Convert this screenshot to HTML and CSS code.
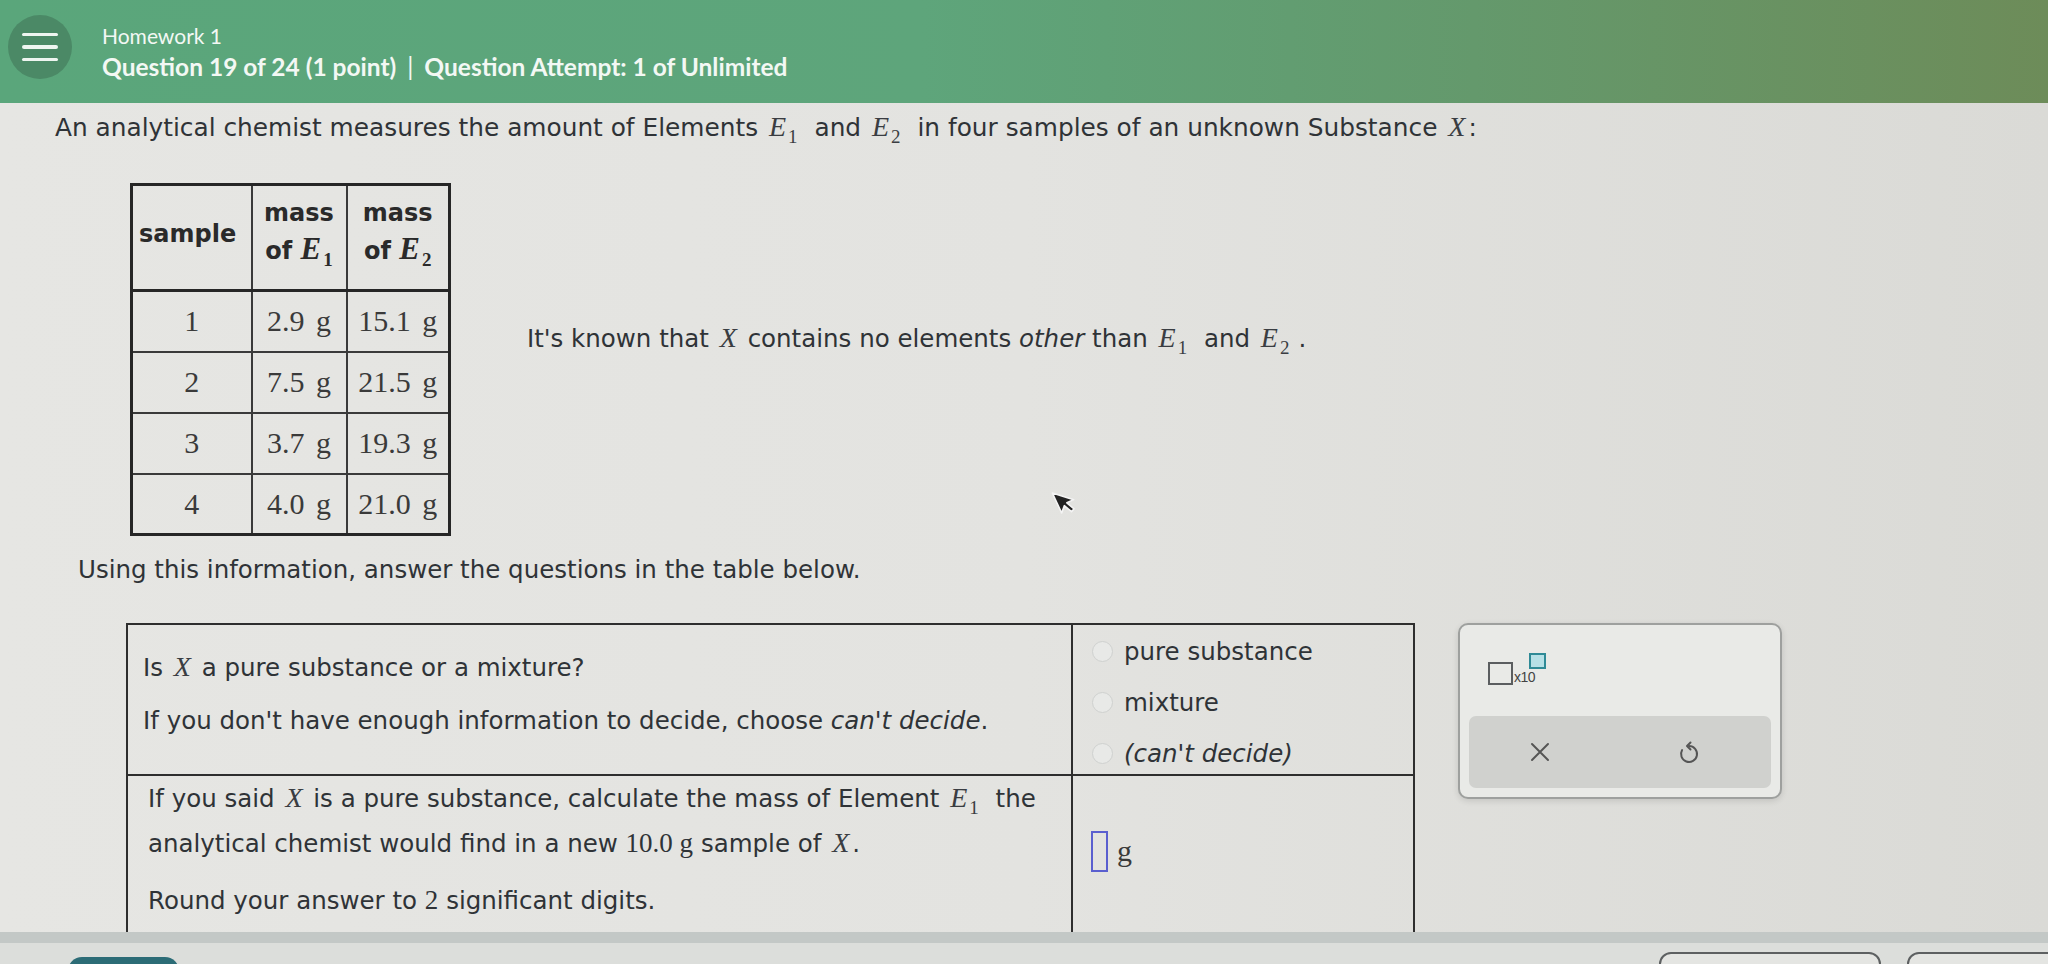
FILE: index.html
```html
<!DOCTYPE html>
<html lang="en">
<head>
<meta charset="utf-8">
<title>Homework 1</title>
<link rel="stylesheet" href="styles.css">
</head>
<body>
<header class="topbar">
  <div class="menu-btn"><span></span><span></span><span></span></div>
  <div class="titles">
    <div class="hw">Homework 1</div>
    <div class="qinfo">Question 19 of 24 (1 point) <span class="sep">|</span> Question Attempt: 1 of Unlimited</div>
  </div>
</header>

<main class="content">
  <p class="intro">An analytical chemist measures the amount of Elements <span class="m">E<sub>1</sub></span> and <span class="m">E<sub>2</sub></span> in four samples of an unknown Substance <span class="m">X</span>:</p>

  <div class="data-row">
    <table class="data">
      <thead>
        <tr>
          <th class="c1">sample</th>
          <th class="c2">mass<br>of <span class="hm">E<sub>1</sub></span></th>
          <th class="c3">mass<br>of <span class="hm">E<sub>2</sub></span></th>
        </tr>
      </thead>
      <tbody>
        <tr><td>1</td><td>2.9 g</td><td>15.1 g</td></tr>
        <tr><td>2</td><td>7.5 g</td><td>21.5 g</td></tr>
        <tr><td>3</td><td>3.7 g</td><td>19.3 g</td></tr>
        <tr><td>4</td><td>4.0 g</td><td>21.0 g</td></tr>
      </tbody>
    </table>
    <p class="known">It's known that <span class="m">X</span> contains no elements <i>other</i> than <span class="m">E<sub>1</sub></span> and <span class="m">E<sub>2</sub></span>.</p>
  </div>

  <p class="using">Using this information, answer the questions in the table below.</p>

  <div class="qa-row">
    <table class="qa">
      <tr class="r1">
        <td class="qcell">
          <p>Is <span class="m">X</span> a pure substance or a mixture?</p>
          <p class="gap">If you don't have enough information to decide, choose <i>can't decide</i>.</p>
        </td>
        <td class="acell">
          <label class="opt"><span class="radio"></span>pure substance</label>
          <label class="opt"><span class="radio"></span>mixture</label>
          <label class="opt"><span class="radio"></span><i>(can't decide)</i></label>
        </td>
      </tr>
      <tr class="r2">
        <td class="qcell q2">
          <p>If you said <span class="m">X</span> is a pure substance, calculate the mass of Element <span class="m">E<sub>1</sub></span> the<br>analytical chemist would find in a new <span class="num">10.0 g</span> sample of <span class="m">X</span>.</p>
          <p class="round">Round your answer to <span class="num">2</span> significant digits.</p>
        </td>
        <td class="acell a2">
          <span class="inbox"></span><span class="unit">g</span>
        </td>
      </tr>
    </table>

    <div class="keypad">
      <div class="sci">
        <span class="sq"></span><span class="x10">x10</span><span class="sup"></span>
      </div>
      <div class="actions">
        <svg class="ico ico-x" width="20" height="20" viewBox="0 0 20 20"><path d="M2 2 L18 18 M18 2 L2 18" stroke="#555" stroke-width="2" fill="none" stroke-linecap="round"/></svg>
        <svg class="ico ico-undo" width="24" height="26" viewBox="0 0 24 26"><path d="M5.1 11 A8 8 0 1 0 12 7" stroke="#555" stroke-width="2" fill="none" stroke-linecap="round"/><path d="M13.5 3.5 L10 7 L13.5 10.5" stroke="#555" stroke-width="2" fill="none" stroke-linecap="round" stroke-linejoin="round"/></svg>
      </div>
    </div>
  </div>
</main>

<div class="band"></div>
<footer class="foot">
  <div class="teal-btn"></div>
  <div class="spacer"></div>
  <div class="out-btn b1"></div>
  <div class="out-btn b2"></div>
</footer>

<svg class="cursor" width="22" height="30" viewBox="0 0 22 30"><path d="M2 2 L2 24 L7.5 18.5 L11.5 27 L15 25.5 L11 17 L18.5 17 Z" fill="#222" stroke="#f4f4f4" stroke-width="1.6" stroke-linejoin="round"/></svg>
</body>
</html>
```
FILE: styles.css
```css
* { box-sizing: border-box; }
html, body { margin: 0; padding: 0; }
body {
  width: 2048px;
  height: 964px;
  overflow: hidden;
  position: relative;
  background: linear-gradient(90deg, #e6e6e3 0%, #e3e3e0 50%, #dadad6 100%);
  font-family: "DejaVu Sans", "Liberation Sans", sans-serif;
  color: #2f3337;
}

/* ---------- header ---------- */
.topbar {
  height: 103px;
  display: flex;
  align-items: center;
  background: linear-gradient(90deg, #5aa67b 0%, #5ea57b 45%, #64996c 72%, #6d8c59 100%);
}
.menu-btn {
  width: 64px;
  height: 64px;
  margin-left: 8px;
  margin-top: -9px;
  border-radius: 50%;
  background: #4b8966;
  display: flex;
  flex-direction: column;
  justify-content: center;
  align-items: center;
  gap: 9px;
}
.menu-btn span {
  display: block;
  width: 36px;
  height: 3.5px;
  border-radius: 2px;
  background: #eef5f0;
}
.titles {
  margin-left: 30px;
  margin-top: 2px;
  color: #f3f8f4;
  font-family: Lato, "Open Sans", sans-serif;
}
.hw {
  font-size: 21px;
  line-height: 26px;
}
.qinfo {
  font-size: 24.5px;
  font-weight: 700;
  line-height: 30px;
  margin-top: 3px;
}
.sep { font-weight: 400; margin: 0 5px; }

/* ---------- content ---------- */
.content {
  height: 829px;
  overflow: hidden;
  padding-left: 55px;
}
p { margin: 0; }
.m {
  font-family: "Liberation Serif", serif;
  font-style: italic;
  font-size: 28px;
  color: #3a3d42;
  margin: 0 3px;
}
.m sub, .hm sub {
  font-style: normal;
  font-size: 19px;
  vertical-align: -7px;
  line-height: 0;
  margin-left: 2px;
}
.m sub { margin-right: 6px; }
.num {
  font-family: "Liberation Serif", serif;
  font-size: 27px;
}
.intro {
  font-size: 24.8px;
  line-height: 32px;
  margin-top: 8px;
}

.data-row {
  display: flex;
  align-items: flex-start;
  margin-top: 39px;
  margin-left: 75px;
}
.data {
  border-collapse: collapse;
  table-layout: fixed;
  width: 318px;
  border: 3px solid #262626;
  flex: none;
}
.data .c1 { width: 120px; }
.data .c2 { width: 95px; }
.data .c3 { width: 103px; }
.data th {
  height: 106px;
  padding: 10px 2px 0;
  vertical-align: top;
  border: 2px solid #3a3a3a;
  border-bottom: 3px solid #262626;
  font-family: "DejaVu Sans", sans-serif;
  font-weight: 700;
  font-size: 24px;
  line-height: 35px;
  color: #2a2a2a;
  text-align: center;
  white-space: nowrap;
}
.data th.c1 { text-align: left; padding: 0 0 6px 6px; vertical-align: middle; }
.hm {
  font-family: "Liberation Serif", serif;
  font-style: italic;
  font-size: 31px;
}
.data td {
  height: 61px;
  border: 2px solid #3a3a3a;
  text-align: center;
  font-family: "Liberation Serif", serif;
  font-size: 30px;
  color: #3a3a3a;
  word-spacing: 4px;
  padding: 0;
  white-space: nowrap;
}
.known {
  margin-left: 76px;
  margin-top: 139px;
  font-size: 24.5px;
  line-height: 32px;
}

.using {
  margin-top: 18px;
  margin-left: 23px;
  font-size: 24.5px;
  line-height: 32px;
}

.qa-row {
  display: flex;
  align-items: flex-start;
  margin-top: 37px;
  margin-left: 71px;
}
.qa {
  border-collapse: collapse;
  table-layout: fixed;
  width: 1287px;
  border: 2px solid #2e2e2e;
  flex: none;
}
.qa td {
  border: 2px solid #2e2e2e;
  vertical-align: top;
  font-size: 24.5px;
}
.qa .qcell { width: 945px; padding: 26px 10px 0 15px; line-height: 32px; }
.qa .acell { width: 342px; }
.qa .r1 td { height: 151px; }
.qa .r2 td { height: 190px; }
.qa .gap { margin-top: 21px; }
.qa .q2 { padding-top: 0; padding-left: 20px; line-height: 44px; }
.qa .round { margin-top: 12px; }

.r1 .acell { padding: 10px 0 0 19px; }
.opt {
  display: flex;
  align-items: center;
  height: 32px;
  margin-bottom: 19px;
  font-size: 24.5px;
  color: #2f3337;
}
.opt:last-child { margin-bottom: 0; }
.radio {
  width: 21px;
  height: 21px;
  border-radius: 50%;
  border: 1.5px solid #cfd1cf;
  background: #e8e9e7;
  margin-right: 11px;
  flex: none;
}
.a2 { padding: 55px 0 0 18px; }
.inbox {
  display: inline-block;
  width: 17px;
  height: 41px;
  border: 2px solid #5a5fcf;
  vertical-align: top;
}
.unit {
  display: inline-block;
  vertical-align: top;
  margin-left: 9px;
  margin-top: 4px;
  font-family: "Liberation Serif", serif;
  font-size: 30px;
  line-height: 32px;
  color: #3a3a3a;
}

.keypad {
  margin-left: 43px;
  width: 324px;
  height: 176px;
  border: 2px solid #9ea09e;
  border-radius: 10px;
  background: #e9eae7;
  box-shadow: 0 2px 6px rgba(0, 0, 0, 0.12);
  padding: 28px 9px 9px 9px;
  display: flex;
  flex-direction: column;
}
.sci {
  display: flex;
  align-items: flex-start;
  margin-left: 19px;
  height: 31px;
}
.sq {
  margin-top: 9px;
  width: 25px;
  height: 23px;
  border: 2px solid #5b5e60;
}
.x10 {
  margin-top: 16px;
  margin-left: 1px;
  font-family: "Liberation Sans", sans-serif;
  font-size: 14px;
  line-height: 16px;
  color: #444;
  letter-spacing: -0.5px;
}
.sup {
  width: 17px;
  height: 16px;
  border: 2px solid #2f8a96;
  background: #b6e0e6;
  margin-left: -6px;
}
.actions {
  margin-top: 32px;
  height: 73px;
  border-radius: 7px;
  background: #d0d1ce;
  display: flex;
  align-items: center;
  padding-left: 61px;
}
.ico { display: block; }
.ico-undo { margin-left: 127px; }

/* ---------- bottom ---------- */
.band {
  height: 11px;
  background: #c3c8c6;
}
.foot {
  height: 21px;
  background: #dcdedb;
  display: flex;
  align-items: flex-start;
  overflow: hidden;
}
.teal-btn {
  margin-left: 68px;
  margin-top: 14px;
  width: 111px;
  height: 30px;
  border-radius: 14px;
  background: #2c6c76;
}
.spacer { flex: 1; }
.out-btn {
  margin-top: 9px;
  height: 30px;
  border: 2px solid #5d6061;
  border-radius: 12px;
  background: #e4e5e2;
}
.b1 { width: 222px; }
.b2 { width: 160px; margin-left: 26px; margin-right: -19px; }

.cursor {
  position: absolute;
  left: 1055px;
  top: 486px;
  transform: rotate(-25deg);
}
```
